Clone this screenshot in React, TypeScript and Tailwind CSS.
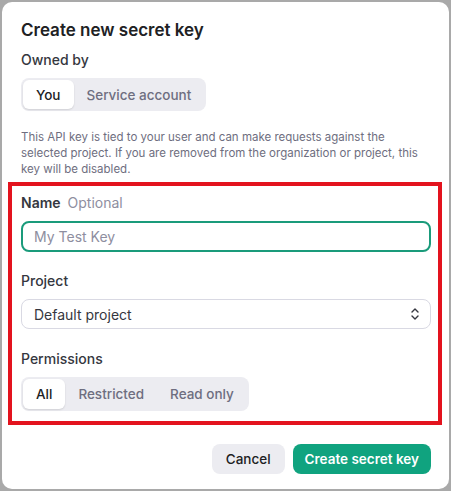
import React, { useState } from 'react';

const font = { fontFamily: 'Inter, "Noto Sans", sans-serif' };

function Segmented({ options, value, onChange }: { options: string[]; value: string; onChange: (v: string) => void }) {
  return (
    <div className="inline-flex items-stretch rounded-[8px] bg-[#ececf1] p-[2px]">
      {options.map((opt) => (
        <button
          key={opt}
          onClick={() => onChange(opt)}
          className={`rounded-[6px] px-[13px] text-[13.5px] font-medium leading-[20px] ${
            value === opt ? 'bg-white text-[#202123] shadow-[0_1px_2px_rgba(0,0,0,0.12)]' : 'text-[#6e6e80]'
          }`}
        >
          {opt}
        </button>
      ))}
    </div>
  );
}

export default function App() {
  const [owner, setOwner] = useState('You');
  const [perm, setPerm] = useState('All');

  return (
    <div className="h-[491px] w-[451px] bg-[#a9a9a9] p-[2px]" style={font}>
      <div className="relative flex h-[487px] w-[447px] flex-col rounded-[10px] bg-white pl-[19px] pr-[18px] pt-[16px]">
        <h2 className="text-[17px] font-semibold leading-[24px] text-[#202123]">Create new secret key</h2>

        <div className="mt-[8px] text-[14px] font-medium leading-[20px] text-[#353740]">Owned by</div>
        <div className="mt-[8px] flex h-[33px]">
          <Segmented options={['You', 'Service account']} value={owner} onChange={setOwner} />
        </div>

        <p className="mt-[18px] max-w-[402px] text-[11.5px] leading-[16px] text-[#6e6e80]">
          This API key is tied to your user and can make requests against the selected project. If you are removed from
          the organization or project, this key will be disabled.
        </p>

        <div className="mt-[16px] flex gap-[7px] text-[14px] leading-[20px]">
          <span className="font-semibold text-[#353740]">Name</span>
          <span className="text-[#8e8ea0]">Optional</span>
        </div>
        <input
          autoFocus
          placeholder="My Test Key"
          className="mt-[8px] h-[31px] w-full rounded-[8px] border-2 border-[#1a9b7b] px-[11px] text-[14px] text-[#202123] caret-[#202123] outline-none placeholder:text-[#8e8ea0]"
        />

        <div className="mt-[19px] text-[14px] font-medium leading-[20px] text-[#353740]">Project</div>
        <div className="mt-[8px] flex h-[30px] items-center justify-between rounded-[8px] border border-[#d9d9e3] pl-[12px] pr-[10px] text-[14px] text-[#353740]">
          <span>Default project</span>
          <svg width="10" height="14" viewBox="0 0 10 14" fill="none" stroke="#353740" strokeWidth="1.4" strokeLinecap="round" strokeLinejoin="round">
            <path d="M2 5l3-3 3 3" />
            <path d="M2 9l3 3 3-3" />
          </svg>
        </div>

        <div className="mt-[20px] text-[14px] font-medium leading-[20px] text-[#353740]">Permissions</div>
        <div className="mt-[8px] flex h-[34px]">
          <Segmented options={['All', 'Restricted', 'Read only']} value={perm} onChange={setPerm} />
        </div>

        <div className="mt-[33px] flex justify-end gap-[8px]">
          <button className="h-[30px] rounded-[8px] bg-[#ececf1] px-[14px] text-[13.5px] font-medium text-[#202123]">Cancel</button>
          <button className="h-[30px] rounded-[8px] bg-[#10a37f] px-[12px] text-[13.5px] font-semibold text-white">Create secret key</button>
        </div>

        <div className="pointer-events-none absolute left-[6px] top-[180px] h-[243px] w-[434px] border-4 border-[#e3131e]" />
      </div>
    </div>
  );
}
